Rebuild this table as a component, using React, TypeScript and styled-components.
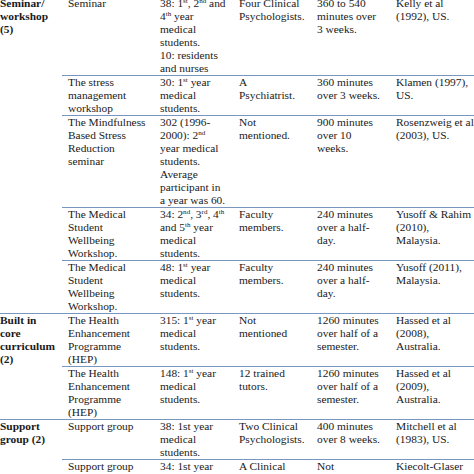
import React from 'react';
import styled, { createGlobalStyle } from 'styled-components';

const GlobalStyle = createGlobalStyle`
  html, body {
    margin: 0;
    padding: 0;
    background: #ffffff;
    overflow: hidden;
  }
`;

const LINE = 13;
const RULE = '1.5px solid #7896c0';

const Page = styled.div`
  width: 474px;
  height: 474px;
  overflow: hidden;
  font-family: 'Liberation Serif', 'Times New Roman', serif;
  font-size: 11.4px;
  line-height: ${LINE}px;
  color: #1a1a1a;
`;

const Table = styled.table`
  border-collapse: collapse;
  table-layout: fixed;
  width: 520px;
  margin-top: -3px;
`;

const Cell = styled.td<{ $group?: boolean }>`
  vertical-align: top;
  padding: 0 0 0 ${(p) => (p.$group ? 0 : 6)}px;
  border-bottom: ${RULE};
  font-weight: ${(p) => (p.$group ? 700 : 400)};
`;

const Line = styled.span`
  display: block;
  white-space: nowrap;
`;

const Sup = styled.sup`
  font-size: 0.62em;
  line-height: 0;
  vertical-align: 0.5em;
`;

// "^" toggles superscript, e.g. "1^st^ year"
const renderLine = (text: string) =>
  text.split('^').map((part, i) =>
    i % 2 === 1 ? <Sup key={i}>{part}</Sup> : <React.Fragment key={i}>{part}</React.Fragment>
  );

const Lines = ({ lines }: { lines: string[] }) => (
  <>
    {lines.map((l, i) => (
      <Line key={i}>{renderLine(l)}</Line>
    ))}
  </>
);

interface Row {
  group?: { lines: string[]; span: number };
  cells: string[][];
}

const rows: Row[] = [
  {
    group: { lines: ['Seminar/', 'workshop', '(5)'], span: 5 },
    cells: [
      ['Seminar'],
      ['38: 1^st^, 2^nd^ and', '4^th^ year', 'medical', 'students.', '10: residents', 'and nurses'],
      ['Four Clinical', 'Psychologists.'],
      ['360 to 540', 'minutes over', '3 weeks.'],
      ['Kelly et al', '(1992), US.'],
    ],
  },
  {
    cells: [
      ['The stress', 'management', 'workshop'],
      ['30: 1^st^ year', 'medical', 'students.'],
      ['A', 'Psychiatrist.'],
      ['360 minutes', 'over 3 weeks.'],
      ['Klamen (1997),', 'US.'],
    ],
  },
  {
    cells: [
      ['The Mindfulness', 'Based Stress', 'Reduction', 'seminar'],
      ['302 (1996-', '2000): 2^nd^', 'year medical', 'students.', 'Average', 'participant in', 'a year was 60.'],
      ['Not', 'mentioned.'],
      ['900 minutes', 'over 10', 'weeks.'],
      ['Rosenzweig et al', '(2003), US.'],
    ],
  },
  {
    cells: [
      ['The Medical', 'Student', 'Wellbeing', 'Workshop.'],
      ['34: 2^nd^, 3^rd^, 4^th^', 'and 5^th^ year', 'medical', 'students.'],
      ['Faculty', 'members.'],
      ['240 minutes', 'over a half-', 'day.'],
      ['Yusoff & Rahim', '(2010),', 'Malaysia.'],
    ],
  },
  {
    cells: [
      ['The Medical', 'Student', 'Wellbeing', 'Workshop.'],
      ['48: 1^st^ year', 'medical', 'students.'],
      ['Faculty', 'members.'],
      ['240 minutes', 'over a half-', 'day.'],
      ['Yusoff (2011),', 'Malaysia.'],
    ],
  },
  {
    group: { lines: ['Built in', 'core', 'curriculum', '(2)'], span: 2 },
    cells: [
      ['The Health', 'Enhancement', 'Programme', '(HEP)'],
      ['315: 1^st^ year', 'medical', 'students.'],
      ['Not', 'mentioned'],
      ['1260 minutes', 'over half of a', 'semester.'],
      ['Hassed et al', '(2008),', 'Australia.'],
    ],
  },
  {
    cells: [
      ['The Health', 'Enhancement', 'Programme', '(HEP)'],
      ['148: 1^st^ year', 'medical', 'students.'],
      ['12 trained', 'tutors.'],
      ['1260 minutes', 'over half of a', 'semester.'],
      ['Hassed et al', '(2009),', 'Australia.'],
    ],
  },
  {
    group: { lines: ['Support', 'group (2)'], span: 2 },
    cells: [
      ['Support group'],
      ['38: 1st year', 'medical', 'students.'],
      ['Two Clinical', 'Psychologists.'],
      ['400 minutes', 'over 8 weeks.'],
      ['Mitchell et al', '(1983), US.'],
    ],
  },
  {
    cells: [
      ['Support group'],
      ['34: 1st year', 'medical', 'students.'],
      ['A Clinical', 'Psychologist.'],
      ['Not', 'mentioned.'],
      ['Kiecolt-Glaser', 'et al (1986), US.'],
    ],
  },
];

const COLS = [62, 92, 79, 78, 79, 130];

export default function App() {
  return (
    <Page>
      <GlobalStyle />
      <Table>
        <colgroup>
          {COLS.map((w, i) => (
            <col key={i} style={{ width: w }} />
          ))}
        </colgroup>
        <tbody>
          {rows.map((row, r) => (
            <tr key={r}>
              {row.group && (
                <Cell $group rowSpan={row.group.span}>
                  <Lines lines={row.group.lines} />
                </Cell>
              )}
              {row.cells.map((lines, c) => (
                <Cell key={c}>
                  <Lines lines={lines} />
                </Cell>
              ))}
            </tr>
          ))}
        </tbody>
      </Table>
    </Page>
  );
}
